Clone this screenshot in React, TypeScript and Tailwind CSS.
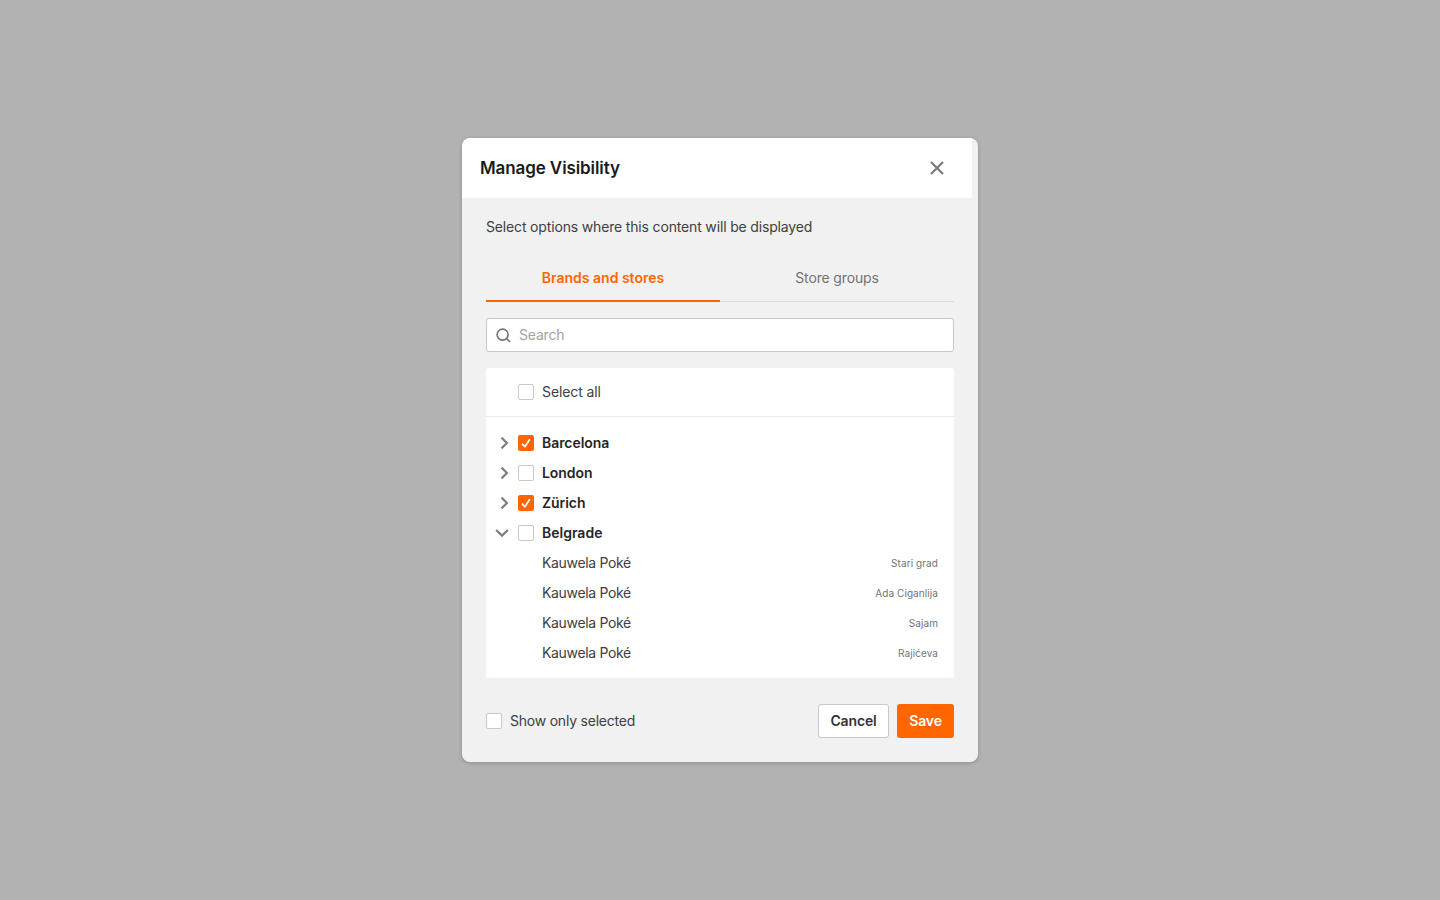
import React from 'react';

const Check = () => (
  <svg width="16" height="16" viewBox="0 0 16 16" fill="none">
    <path d="M4 8.6L6.9 11.8L11.8 4.2" stroke="white" strokeWidth="1.7" strokeLinejoin="round" />
  </svg>
);

const Checkbox = ({ checked = false }: { checked?: boolean }) =>
  checked ? (
    <span className="w-4 h-4 shrink-0 rounded-[2px] bg-[#ff6600] flex items-center justify-center">
      <Check />
    </span>
  ) : (
    <span className="w-4 h-4 shrink-0 rounded-[2px] bg-white border border-[#c8c8c8]" />
  );

const ChevronRight = () => (
  <svg width="12" height="14" viewBox="0 0 12 14" fill="none">
    <path d="M3.5 1.6L8.9 7L3.5 12.4" stroke="#808080" strokeWidth="2.2" />
  </svg>
);

const ChevronDown = () => (
  <svg width="14" height="12" viewBox="0 0 14 12" fill="none">
    <path d="M1.2 3L7 8.6L12.8 3" stroke="#808080" strokeWidth="2.2" />
  </svg>
);

const cities = [
  { name: 'Barcelona', checked: true },
  { name: 'London', checked: false },
  { name: 'Zürich', checked: true },
];

const stores = ['Stari grad', 'Ada Ciganlija', 'Sajam', 'Rajićeva'];

export default function App() {
  return (
    <div className="min-h-screen bg-[#b2b2b2] flex items-center justify-center font-['Inter',sans-serif]">
      <div className="w-[516px] h-[624px] bg-[#f1f1f1] rounded-lg overflow-hidden shadow-[0_1px_4px_rgba(0,0,0,0.2)] flex flex-col">
        {/* Header */}
        <div className="mr-[6px] h-[60px] shrink-0 bg-white rounded-tl-lg flex items-center justify-between pl-[18px] pr-[27px]">
          <h2 className="text-[17px] leading-6 font-semibold tracking-[-0.1px] text-[#1a1a1a]">Manage Visibility</h2>
          <svg width="16" height="16" viewBox="0 0 16 16" fill="none">
            <path d="M2 2L14 14M14 2L2 14" stroke="#7a7a7a" strokeWidth="2.2" />
          </svg>
        </div>

        <div className="flex-1 px-6 pt-[19px] pb-6 flex flex-col">
          <p className="text-sm leading-5 tracking-[-0.16px] text-[#404040]">Select options where this content will be displayed</p>

          {/* Tabs */}
          <div className="mt-[19px] flex h-[46px] border-b border-[#dcdcdc]">
            <div className="w-1/2 h-[46px] flex items-center justify-center pb-[1px] border-b-2 border-[#ff6600] text-sm font-semibold text-[#ff6600]">
              Brands and stores
            </div>
            <div className="w-1/2 flex items-center justify-center pb-[2px] text-sm tracking-[-0.15px] text-[#737373]">Store groups</div>
          </div>

          {/* Search */}
          <div className="mt-4 h-[34px] bg-white border border-[#c8c8c8] rounded-[3px] flex items-center gap-2 pl-[9px]">
            <svg width="15" height="15" viewBox="0 0 15 15" fill="none">
              <circle cx="6.6" cy="6.6" r="5.5" stroke="#737373" strokeWidth="1.6" />
              <path d="M10.6 10.6L14 14" stroke="#737373" strokeWidth="1.6" />
            </svg>
            <span className="text-sm tracking-[-0.2px] text-[#a3a3a3]">Search</span>
          </div>

          {/* List */}
          <div className="mt-4 bg-white rounded-[3px] flex flex-col">
            <div className="h-[49px] shrink-0 border-b border-[#ebebeb] flex items-center gap-2 pl-8">
              <Checkbox />
              <span className="text-sm tracking-[-0.1px] text-[#404040]">Select all</span>
            </div>
            <div className="pt-[11px] pb-[10px] flex flex-col">
              {cities.map((c) => (
                <div key={c.name} className="h-[30px] flex items-center">
                  <span className="w-8 pl-3 flex items-center"><ChevronRight /></span>
                  <Checkbox checked={c.checked} />
                  <span className="ml-2 text-sm font-semibold tracking-[-0.05px] text-[#262626]">{c.name}</span>
                </div>
              ))}
              <div className="h-[30px] flex items-center">
                <span className="w-8 pl-[9px] flex items-center"><ChevronDown /></span>
                <Checkbox />
                <span className="ml-2 text-sm font-semibold text-[#262626]">Belgrade</span>
              </div>
              {stores.map((s) => (
                <div key={s} className="h-[30px] flex items-center justify-between pl-14 pr-4">
                  <span className="text-sm tracking-[-0.33px] text-[#404040]">Kauwela Poké</span>
                  <span className="text-[10px] tracking-[0.08px] text-[#737373]">{s}</span>
                </div>
              ))}
            </div>
          </div>

          {/* Footer */}
          <div className="mt-[26px] flex items-center justify-between">
            <div className="flex items-center gap-2">
              <Checkbox />
              <span className="text-sm tracking-[-0.22px] text-[#404040]">Show only selected</span>
            </div>
            <div className="flex items-center gap-2">
              <button className="w-[71px] h-[34px] bg-white border border-[#c8c8c8] rounded-[3px] text-sm font-semibold tracking-[-0.15px] text-[#333333]">Cancel</button>
              <button className="w-[57px] h-[34px] bg-[#ff6600] rounded-[3px] text-sm font-semibold tracking-[-0.15px] text-white">Save</button>
            </div>
          </div>
        </div>
      </div>
    </div>
  );
}
